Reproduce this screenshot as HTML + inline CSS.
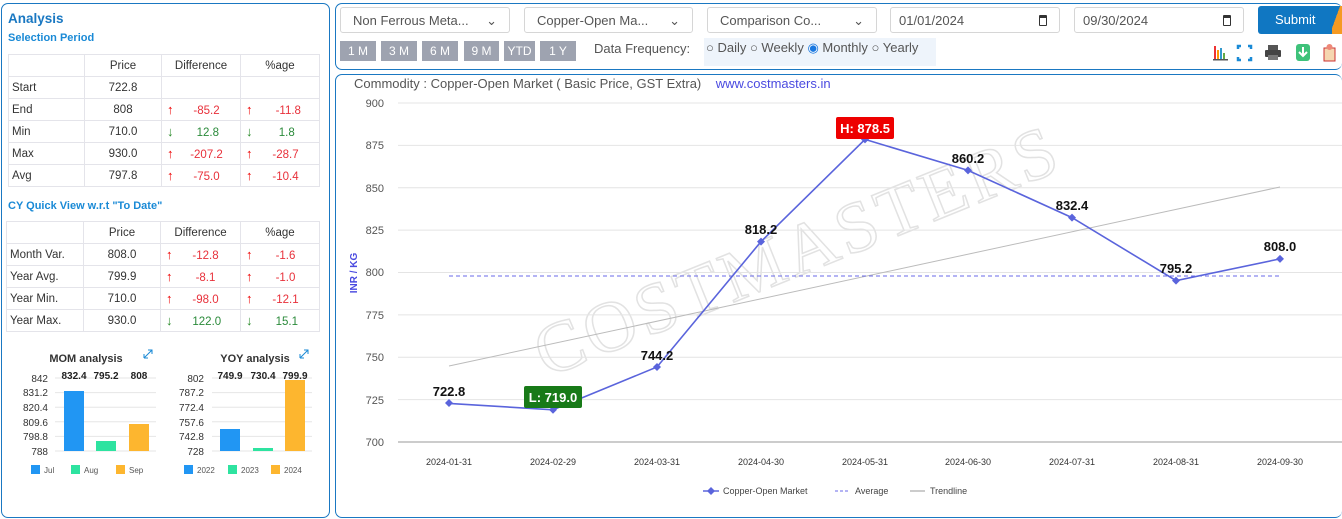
<!DOCTYPE html>
<html><head><meta charset="utf-8"><style>
*{box-sizing:border-box;margin:0;padding:0}
body{width:1342px;height:519px;background:#fff;font-family:"Liberation Sans",sans-serif;position:relative;overflow:hidden;color:#333}
.abs{position:absolute}
.panel{position:absolute;border:1.5px solid #1a78c2;border-radius:7px}
table{border-collapse:collapse;font-size:11.5px;position:absolute}
td{border:1px solid #e4e4ea;height:22px;padding:0 3px;color:#333}
.c{text-align:center}
.r{color:#e8303a}.g{color:#2a8a3a}
.ar{color:#e00;font-weight:bold;display:inline-block;width:22px;text-align:left;padding-left:2px;font-size:13px}
.ag{color:#2a8a2a;font-weight:bold;display:inline-block;width:22px;text-align:left;padding-left:2px;font-size:13px}
.sel{position:absolute;top:7px;height:26px;border:1px solid #d6d6d6;border-radius:3px;font-size:13px;color:#555;padding:5px 12px}
.btn{position:absolute;top:41px;height:20px;background:#9ea3b0;color:#fff;font-size:12px;text-align:center;line-height:20px}
.cal{float:right;display:inline-block;width:8px;height:11px;border:1.5px solid #333;border-top-width:3px;border-radius:1px;margin-top:2px}
</style></head><body>

<div class="panel" style="left:1px;top:3px;width:329px;height:515px"></div>
<div class="abs" style="left:8px;top:11px;font-size:13.5px;font-weight:bold;color:#1a78c2">Analysis</div>
<div class="abs" style="left:8px;top:32px;font-size:11px;font-weight:bold;color:#1a8ad6">Selection Period</div>
<table style="left:8px;top:54px;width:312px">
<tr><td style="width:76px"></td><td class="c" style="width:77px">Price</td><td class="c" style="width:79px">Difference</td><td class="c">%age</td></tr>
<tr><td>Start</td><td class="c">722.8</td><td></td><td></td></tr>
<tr><td>End</td><td class="c">808</td><td><span class="ar">↑</span><span class="r">&nbsp;&nbsp;-85.2</span></td><td><span class="ar">↑</span><span class="r">&nbsp;&nbsp;&nbsp;-11.8</span></td></tr>
<tr><td>Min</td><td class="c">710.0</td><td><span class="ag">↓</span><span class="g">&nbsp;&nbsp;&nbsp;12.8</span></td><td><span class="ag">↓</span><span class="g">&nbsp;&nbsp;&nbsp;&nbsp;1.8</span></td></tr>
<tr><td>Max</td><td class="c">930.0</td><td><span class="ar">↑</span><span class="r">&nbsp;-207.2</span></td><td><span class="ar">↑</span><span class="r">&nbsp;&nbsp;-28.7</span></td></tr>
<tr><td>Avg</td><td class="c">797.8</td><td><span class="ar">↑</span><span class="r">&nbsp;&nbsp;-75.0</span></td><td><span class="ar">↑</span><span class="r">&nbsp;&nbsp;-10.4</span></td></tr>
</table>
<div class="abs" style="left:8px;top:200px;font-size:11px;font-weight:bold;color:#1a8ad6">CY Quick View w.r.t "To Date"</div>
<table style="left:6px;top:221px;width:314px">
<tr><td style="width:77px"></td><td class="c" style="width:77px">Price</td><td class="c" style="width:80px">Difference</td><td class="c">%age</td></tr>
<tr><td>Month Var.</td><td class="c">808.0</td><td><span class="ar">↑</span><span class="r">&nbsp;&nbsp;-12.8</span></td><td><span class="ar">↑</span><span class="r">&nbsp;&nbsp;&nbsp;-1.6</span></td></tr>
<tr><td>Year Avg.</td><td class="c">799.9</td><td><span class="ar">↑</span><span class="r">&nbsp;&nbsp;&nbsp;-8.1</span></td><td><span class="ar">↑</span><span class="r">&nbsp;&nbsp;&nbsp;-1.0</span></td></tr>
<tr><td>Year Min.</td><td class="c">710.0</td><td><span class="ar">↑</span><span class="r">&nbsp;&nbsp;-98.0</span></td><td><span class="ar">↑</span><span class="r">&nbsp;&nbsp;-12.1</span></td></tr>
<tr><td>Year Max.</td><td class="c">930.0</td><td><span class="ag">↓</span><span class="g">&nbsp;&nbsp;122.0</span></td><td><span class="ag">↓</span><span class="g">&nbsp;&nbsp;&nbsp;15.1</span></td></tr>
</table>

<svg class="abs" style="left:0;top:340px" width="330" height="140" font-family="Liberation Sans" font-size="10">
<text x="86" y="22" font-weight="bold" font-size="11" text-anchor="middle" fill="#333">MOM analysis</text>
<text x="255" y="22" font-weight="bold" font-size="11" text-anchor="middle" fill="#333">YOY analysis</text>
<path d="M144 18l8-8M148 10h4v4M144 18v-4M144 18h4M300 18l8-8M304 10h4v4M300 18v-4M300 18h4" stroke="#1a8ad6" stroke-width="1" fill="none"/>
<g stroke="#e6e6e6"><line x1="55" x2="156" y1="38" y2="38"/><line x1="55" x2="156" y1="52.6" y2="52.6"/><line x1="55" x2="156" y1="67.2" y2="67.2"/><line x1="55" x2="156" y1="81.8" y2="81.8"/><line x1="55" x2="156" y1="96.4" y2="96.4"/><line x1="55" x2="156" y1="111" y2="111"/>
<line x1="212" x2="312" y1="38" y2="38"/><line x1="212" x2="312" y1="52.6" y2="52.6"/><line x1="212" x2="312" y1="67.2" y2="67.2"/><line x1="212" x2="312" y1="81.8" y2="81.8"/><line x1="212" x2="312" y1="96.4" y2="96.4"/><line x1="212" x2="312" y1="111" y2="111"/></g>
<g text-anchor="end" fill="#333"><text x="48" y="42">842</text><text x="48" y="56">831.2</text><text x="48" y="71">820.4</text><text x="48" y="86">809.6</text><text x="48" y="100">798.8</text><text x="48" y="115">788</text>
<text x="204" y="42">802</text><text x="204" y="56">787.2</text><text x="204" y="71">772.4</text><text x="204" y="86">757.6</text><text x="204" y="100">742.8</text><text x="204" y="115">728</text></g>
<rect x="64" y="51" width="20" height="60" fill="#2196f3"/><rect x="96" y="101" width="20" height="10" fill="#2ee3a0"/><rect x="129" y="84" width="20" height="27" fill="#fdb62f"/>
<rect x="220" y="89" width="20" height="22" fill="#2196f3"/><rect x="253" y="108" width="20" height="3" fill="#2ee3a0"/><rect x="285" y="40" width="20" height="71" fill="#fdb62f"/>
<g font-weight="bold" text-anchor="middle" fill="#222"><text x="74" y="39">832.4</text><text x="106" y="39">795.2</text><text x="139" y="39">808</text><text x="230" y="39">749.9</text><text x="263" y="39">730.4</text><text x="295" y="39">799.9</text></g>
<g font-size="8" fill="#555"><rect x="31" y="125" width="9" height="9" fill="#2196f3"/><text x="44" y="133">Jul</text><rect x="71" y="125" width="9" height="9" fill="#2ee3a0"/><text x="84" y="133">Aug</text><rect x="116" y="125" width="9" height="9" fill="#fdb62f"/><text x="129" y="133">Sep</text>
<rect x="184" y="125" width="9" height="9" fill="#2196f3"/><text x="197" y="133">2022</text><rect x="228" y="125" width="9" height="9" fill="#2ee3a0"/><text x="241" y="133">2023</text><rect x="271" y="125" width="9" height="9" fill="#fdb62f"/><text x="284" y="133">2024</text></g>
</svg>

<div class="panel" style="left:335px;top:3px;width:1007px;height:67px;border-right:none"></div>
<div class="sel" style="left:340px;width:170px">Non Ferrous Meta... <span style="float:right">⌄</span></div>
<div class="sel" style="left:524px;width:169px">Copper-Open Ma... <span style="float:right">⌄</span></div>
<div class="sel" style="left:707px;width:170px">Comparison Co... <span style="float:right">⌄</span></div>
<div class="sel" style="left:890px;width:170px;padding-left:8px">01/01/2024 <span class="cal"></span></div>
<div class="sel" style="left:1074px;width:170px;padding-left:8px">09/30/2024 <span class="cal"></span></div>
<div class="abs" style="left:1258px;top:6px;width:84px;height:28px;background:#1077c2;color:#fff;font-size:13px;line-height:28px;padding-left:17px;border-radius:3px">Submit</div>
<div class="abs" style="left:1332px;top:6px;width:10px;height:28px;background:linear-gradient(110deg,#1077c2 40%,#f59a23 40%)"></div>
<div class="btn" style="left:340px;width:36px">1 M</div><div class="btn" style="left:381px;width:36px">3 M</div><div class="btn" style="left:422px;width:36px">6 M</div><div class="btn" style="left:464px;width:35px">9 M</div><div class="btn" style="left:504px;width:31px">YTD</div><div class="btn" style="left:540px;width:36px">1 Y</div>
<div class="abs" style="left:594px;top:41px;font-size:13px;color:#555">Data Frequency:</div>
<div class="abs" style="left:704px;top:38px;width:232px;height:28px;background:#eef4fb"></div>
<div class="abs" style="left:706px;top:40px;font-size:13px;color:#555">○ Daily ○ Weekly <span style="color:#1a78e0">◉</span> Monthly ○ Yearly</div>
<svg class="abs" style="left:1212px;top:42px" width="130" height="22">
<rect x="2" y="4" width="2" height="14" fill="#e33"/><rect x="5" y="8" width="2" height="10" fill="#f90"/><rect x="8" y="6" width="2" height="12" fill="#39c"/><rect x="11" y="11" width="2" height="7" fill="#6a4"/><rect x="1" y="17" width="15" height="1.5" fill="#555"/>
<path d="M29 4h-3v3M36 4h3v3M29 18h-3v-3M36 18h3v-3" stroke="#1a8ad6" stroke-width="2.5" fill="none"/>
<rect x="56" y="3" width="10" height="5" fill="#555"/><rect x="53" y="8" width="16" height="7" rx="1" fill="#444"/><rect x="56" y="13" width="10" height="5" fill="#777"/>
<rect x="84" y="2" width="14" height="17" rx="3" fill="#3ec27a"/><path d="M91 5v8M87 10l4 4 4-4" stroke="#fff" stroke-width="2" fill="none"/>
<rect x="112" y="6" width="11" height="13" fill="#f5d6b0" stroke="#c33"/><circle cx="117.5" cy="5" r="3" fill="#e87"/>
</svg>

<div class="panel" style="left:335px;top:74px;width:1007px;height:444px;border-right:none"></div>
<div class="abs" style="left:354px;top:76px;font-size:13px;color:#555">Commodity : Copper-Open Market ( Basic Price, GST Extra) &nbsp;&nbsp;&nbsp;<span style="color:#4a4ae0">www.costmasters.in</span></div>

<svg class="abs" style="left:0;top:0" width="1342" height="519" font-family="Liberation Sans">
<text x="510" y="350" font-family="Liberation Serif" font-size="72" fill="none" stroke="#e2e2e2" stroke-width="1.5" transform="rotate(-22 600 270)" letter-spacing="4">COSTMASTERS</text>
<g stroke="#e4e4e4"><line x1="398" x2="1342" y1="103" y2="103"/><line x1="398" x2="1342" y1="145.4" y2="145.4"/><line x1="398" x2="1342" y1="187.8" y2="187.8"/><line x1="398" x2="1342" y1="230.1" y2="230.1"/><line x1="398" x2="1342" y1="272.5" y2="272.5"/><line x1="398" x2="1342" y1="314.9" y2="314.9"/><line x1="398" x2="1342" y1="357.3" y2="357.3"/><line x1="398" x2="1342" y1="399.6" y2="399.6"/></g>
<line x1="398" x2="1342" y1="442" y2="442" stroke="#999"/>
<g font-size="11" fill="#555" text-anchor="end"><text x="384" y="107">900</text><text x="384" y="149">875</text><text x="384" y="192">850</text><text x="384" y="234">825</text><text x="384" y="276">800</text><text x="384" y="319">775</text><text x="384" y="361">750</text><text x="384" y="404">725</text><text x="384" y="446">700</text></g>
<text x="357" y="273" font-size="10" font-weight="bold" fill="#4a4ae0" transform="rotate(-90 357 273)" text-anchor="middle">INR / KG</text>
<g font-size="9" fill="#333" text-anchor="middle"><text x="449" y="465">2024-01-31</text><text x="553" y="465">2024-02-29</text><text x="657" y="465">2024-03-31</text><text x="761" y="465">2024-04-30</text><text x="865" y="465">2024-05-31</text><text x="968" y="465">2024-06-30</text><text x="1072" y="465">2024-07-31</text><text x="1176" y="465">2024-08-31</text><text x="1280" y="465">2024-09-30</text></g>
<line x1="449" y1="366" x2="1280" y2="187" stroke="#bbb"/>
<line x1="449" y1="276" x2="1280" y2="276" stroke="#6a6ae8" stroke-dasharray="4 3"/>
<polyline points="449,403.4 553,409.8 657,367 761,241.6 865,139.4 968,170.4 1072,217.6 1176,280.6 1280,258.9" fill="none" stroke="#5a64dc" stroke-width="1.6"/>
<g fill="#5a64dc"><path d="M449 399l4 4-4 4-4-4z"/><path d="M553 405.8l4 4-4 4-4-4z"/><path d="M657 363l4 4-4 4-4-4z"/><path d="M761 237.6l4 4-4 4-4-4z"/><path d="M865 135.4l4 4-4 4-4-4z"/><path d="M968 166.4l4 4-4 4-4-4z"/><path d="M1072 213.6l4 4-4 4-4-4z"/><path d="M1176 276.6l4 4-4 4-4-4z"/><path d="M1280 254.9l4 4-4 4-4-4z"/></g>
<g font-size="13" font-weight="bold" fill="#111" text-anchor="middle"><text x="449" y="396">722.8</text><text x="657" y="360">744.2</text><text x="761" y="234">818.2</text><text x="968" y="163">860.2</text><text x="1072" y="210">832.4</text><text x="1176" y="273">795.2</text><text x="1280" y="251">808.0</text></g>
<rect x="836" y="117" width="58" height="22" rx="2" fill="#e00"/><text x="865" y="133" font-size="13" font-weight="bold" fill="#fff" text-anchor="middle">H: 878.5</text>
<rect x="524" y="386" width="58" height="22" rx="2" fill="#187a18"/><text x="553" y="402" font-size="13" font-weight="bold" fill="#fff" text-anchor="middle">L: 719.0</text>
<g font-size="9" fill="#444"><line x1="703" x2="719" y1="491" y2="491" stroke="#5a64dc" stroke-width="1.5"/><path d="M711 487l4 4-4 4-4-4z" fill="#5a64dc"/><text x="723" y="494">Copper-Open Market</text>
<line x1="835" x2="850" y1="491" y2="491" stroke="#6a6ae8" stroke-dasharray="3 2"/><text x="855" y="494">Average</text>
<line x1="910" x2="925" y1="491" y2="491" stroke="#bbb" stroke-width="1.5"/><text x="930" y="494">Trendline</text></g>
</svg>
</body></html>
